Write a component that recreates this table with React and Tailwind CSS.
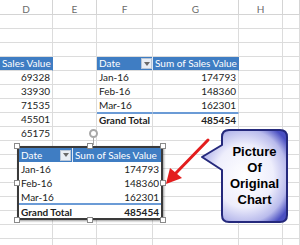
import React from 'react';

const cols = ['D', 'E', 'F', 'G', 'H', ''];
const font = { fontFamily: 'Lato, "Open Sans", sans-serif' };

// sheet contents by row (0-based under the column header)
const leftValues = { 4: '69328', 5: '33930', 6: '71535', 7: '45501', 8: '65175' };
const pivot = [
  ['Jan-16', '174793'],
  ['Feb-16', '148360'],
  ['Mar-16', '162301'],
];

function Cell({ className = '', children }) {
  return (
    <div className={`h-[14px] border-r border-b border-[#dcdcdc] text-[10px] leading-[13px] px-[2px] overflow-hidden whitespace-nowrap text-[#222] ${className}`}>
      {children}
    </div>
  );
}

function Dropdown() {
  return (
    <span className="flex items-center justify-center w-[11px] h-[11px] bg-[#e9eef5] border border-[#b8c6d8]">
      <svg width="6" height="4" viewBox="0 0 6 4"><path d="M0 0h6L3 4z" fill="#6a6a6a" /></svg>
    </span>
  );
}

function Row({ r }) {
  if (r === 3) {
    return (
      <>
        <Cell className="bg-[#3f7dc3] text-white border-r-[#3f7dc3]">Sales Value</Cell>
        <Cell />
        <Cell className="bg-[#3f7dc3] text-white flex items-center justify-between pr-0 border-r-[#dfe8f3]">
          <span>Date</span>
          <Dropdown />
        </Cell>
        <Cell className="bg-[#3f7dc3] text-white border-r-[#3f7dc3]">Sum of Sales Value</Cell>
        <Cell />
        <Cell />
      </>
    );
  }
  const p = r >= 4 && r <= 6 ? pivot[r - 4] : null;
  const gt = r === 7;
  return (
    <>
      <Cell className="text-right">{leftValues[r]}</Cell>
      <Cell />
      {p && <Cell className={r === 6 ? 'border-b-[#6b9bd6]' : ''}>{p[0]}</Cell>}
      {p && <Cell className={`text-right ${r === 6 ? 'border-b-[#6b9bd6]' : ''}`}>{p[1]}</Cell>}
      {gt && <Cell className="font-bold border-t border-t-[#6b9bd6] leading-[12px]">Grand Total</Cell>}
      {gt && <Cell className="font-bold text-right border-t border-t-[#6b9bd6] leading-[12px]">485454</Cell>}
      {!p && !gt && <Cell />}
      {!p && !gt && <Cell />}
      <Cell />
      <Cell />
    </>
  );
}

function Handle({ className }) {
  return <div className={`absolute w-[6px] h-[6px] bg-white border border-[#8a8a8a] ${className}`} />;
}

function PastedPicture() {
  return (
    <div className="absolute left-[16px] top-[145px] w-[148px] h-[76px]">
      <div className="absolute left-[73px] top-[-16px] w-[9px] h-[9px] rounded-full border-2 border-[#a8a8a8] bg-white" />
      <div className="absolute left-[77px] top-[-7px] w-px h-[7px] bg-[#a8a8a8]" />
      <div className="absolute inset-[1px] border-2 border-[#3a3a3a] bg-white shadow-[1px_1px_2px_rgba(0,0,0,0.4)]">
        <div className="grid grid-cols-[53px_1fr] text-[10px] leading-[14px] text-[#222] whitespace-nowrap">
          <div className="h-[14px] bg-[#3f7dc3] text-white pl-[2px] flex items-center justify-between pr-[1px]">
            <span>Date</span>
            <Dropdown />
          </div>
          <div className="h-[14px] bg-[#3f7dc3] text-white pl-[2px] border-l border-[#dfe8f3] overflow-hidden">Sum of Sales Value</div>
          {pivot.map(([d, v], i) => (
            <React.Fragment key={d}>
              <div className={`h-[14px] pl-[2px] ${i === 2 ? 'border-b-2 border-[#6b9bd6] h-[15px]' : ''}`}>{d}</div>
              <div className={`h-[14px] pr-[2px] text-right ${i === 2 ? 'border-b-2 border-[#6b9bd6] h-[15px]' : ''}`}>{v}</div>
            </React.Fragment>
          ))}
          <div className="h-[14px] pl-[2px] font-bold overflow-visible">Grand Total</div>
          <div className="h-[14px] pr-[2px] text-right font-bold">485454</div>
        </div>
      </div>
      <Handle className="left-[-2px] top-[-2px]" />
      <Handle className="left-[71px] top-[-2px]" />
      <Handle className="right-[-2px] top-[-2px]" />
      <Handle className="left-[-2px] top-[35px]" />
      <Handle className="right-[-2px] top-[35px]" />
      <Handle className="left-[-2px] bottom-[-2px]" />
      <Handle className="left-[71px] bottom-[-2px]" />
      <Handle className="right-[-2px] bottom-[-2px]" />
    </div>
  );
}

function Callout() {
  return (
    <div className="absolute left-[198px] top-[127px] w-[94px] h-[98px]">
      <svg width="94" height="98" viewBox="0 0 94 98" className="absolute inset-0">
        <defs>
          <radialGradient id="glow" cx="0.5" cy="0.5" r="0.62">
            <stop offset="0" stopColor="#ffffff" />
            <stop offset="0.55" stopColor="#eeeefc" />
            <stop offset="0.82" stopColor="#b9bbec" />
            <stop offset="1" stopColor="#4b50c2" />
          </radialGradient>
        </defs>
        <path
          d="M31 3 H82 Q89 3 89 10 V88 Q89 95 82 95 H31 Q24 95 24 88 V43 L4 30 L24 18 V10 Q24 3 31 3 Z"
          fill="url(#glow)"
          stroke="#25297c"
          strokeWidth="2"
          strokeLinejoin="round"
        />
      </svg>
      <div
        className="absolute left-[24px] top-[17px] w-[65px] text-center text-[13px] leading-[16px] font-bold text-black"
        style={{ fontFamily: '"Liberation Sans", Arial, sans-serif' }}
      >
        Picture<br />Of<br />Original<br />Chart
      </div>
    </div>
  );
}

function Arrow() {
  return (
    <svg width="50" height="52" viewBox="0 0 50 52" className="absolute left-[162px] top-[136px]">
      <line x1="46" y1="4" x2="13" y2="38" stroke="#e31d1d" strokeWidth="3" strokeLinecap="round" />
      <path d="M4 48 L8 32 L20 42 Z" fill="#e31d1d" />
    </svg>
  );
}

export default function App() {
  return (
    <div className="relative w-[300px] h-[245px] overflow-hidden bg-white" style={font}>
      <div className="grid grid-cols-[53px_44px_56px_86px_44px_1fr]">
        {cols.map((c, i) => (
          <div key={i} className="h-[15px] border-r border-b border-[#d4d4d4] text-center text-[10px] leading-[18px] text-[#6b6b6b]">
            {c}
          </div>
        ))}
        {Array.from({ length: 17 }, (_, r) => (
          <Row key={r} r={r} />
        ))}
      </div>
      <PastedPicture />
      <Arrow />
      <Callout />
    </div>
  );
}
